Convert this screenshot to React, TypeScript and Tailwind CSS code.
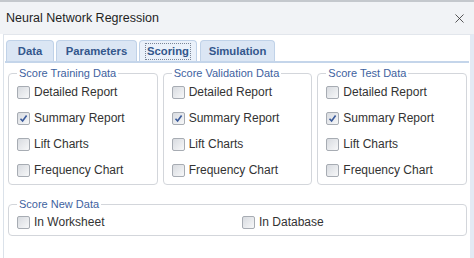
import { X } from 'lucide-react';

const font = { fontFamily: 'Tahoma, "Liberation Sans", "DejaVu Sans", sans-serif' };

function Check({ label, checked }: { label: string; checked?: boolean }) {
  return (
    <div className="flex items-center h-[26px] gap-[4px]">
      <span className="w-[13px] h-[13px] border border-[#a7acb3] rounded-[2px] bg-gradient-to-br from-[#d8dbe0] to-[#f7f8f9] flex items-center justify-center">
        {checked && (
          <svg width="9" height="9" viewBox="0 0 9 9">
            <path d="M1.5 4.8 L3.6 7 L7.6 1.5" fill="none" stroke="#3a5a9a" strokeWidth="1.6" />
          </svg>
        )}
      </span>
      <span className="text-[12px] text-[#333]">{label}</span>
    </div>
  );
}

function Group({ title }: { title: string }) {
  return (
    <fieldset className="flex-1 border border-[#d3d6db] rounded-[4px] pl-[8px] h-[118px]">
      <legend className="px-[2px] text-[11px] text-[#3e62a0] leading-[13px]">{title}</legend>
      <div className="mt-[-1px]">
        <Check label="Detailed Report" />
        <Check label="Summary Report" checked />
        <Check label="Lift Charts" />
        <Check label="Frequency Chart" />
      </div>
    </fieldset>
  );
}

export default function App() {
  const tabs = [
    { name: 'Data', w: 'w-[48px]' },
    { name: 'Parameters', w: 'w-[81px]' },
    { name: 'Scoring', w: 'w-[58px]', active: true },
    { name: 'Simulation', w: 'w-[75px]' },
  ];

  return (
    <div style={font} className="w-[474px] h-[258px] bg-white flex flex-col overflow-hidden">
      <div className="h-[34px] bg-[#f1f3f6] border-t-2 border-[#c4c8cd] flex items-center justify-between pl-[6px] pr-[7px]">
        <span className="text-[12.5px] text-[#1f1f1f]">Neural Network Regression</span>
        <X className="w-[15px] h-[15px] text-[#333]" strokeWidth={1.3} />
      </div>
      <div className="flex-1 border-l border-[#dbe2ea] border-r-[4px] border-r-[#e3eaf4] border-t border-t-[#e2e6ec] ml-[3px] pl-[1px]">
        <div className="mt-[6px] flex items-end gap-[2px] border-b-[2px] border-[#c4d5ea] pl-[1px] mr-[1px] h-[22px]">
          {tabs.map((t) => (
            <div
              key={t.name}
              className={`${t.w} h-[21px] rounded-t-[4px] border border-b-0 border-[#c0d2e8] flex items-center justify-center text-[11.3px] font-bold text-[#33578c] ${
                t.active ? 'bg-[#eaf1fa] mr-[1px]' : 'bg-[#dbe6f4]'
              }`}
            >
              {t.active ? (
                <span className="border border-dotted border-[#7a8597] px-[1px] leading-[15px]">{t.name}</span>
              ) : (
                t.name
              )}
            </div>
          ))}
        </div>
        <div className="flex gap-[5px] mt-[4px] px-[3px]">
          <Group title="Score Training Data" />
          <Group title="Score Validation Data" />
          <Group title="Score Test Data" />
        </div>
        <fieldset className="mx-[3px] mt-[13px] border border-[#d3d6db] rounded-[4px] h-[38px] pl-[8px] flex">
          <legend className="px-[2px] text-[11px] text-[#3e62a0] leading-[13px]">Score New Data</legend>
          <div className="flex -mt-[2px]">
            <div className="w-[225px]">
              <Check label="In Worksheet" />
            </div>
            <Check label="In Database" />
          </div>
        </fieldset>
      </div>
    </div>
  );
}
